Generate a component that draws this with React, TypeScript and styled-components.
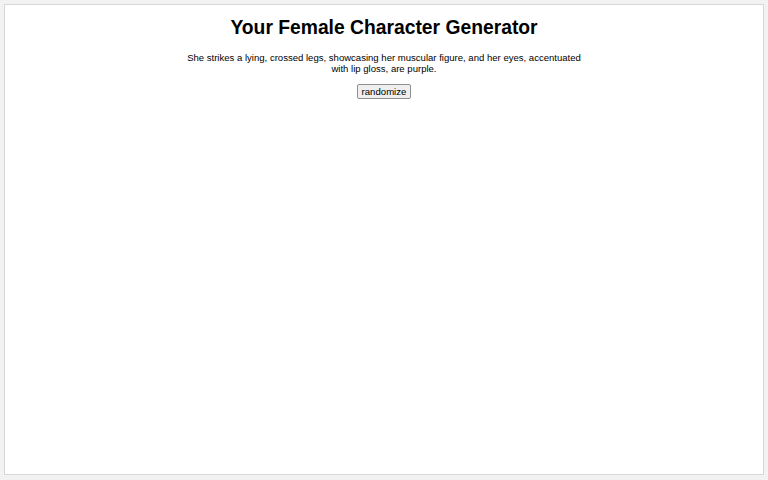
import React, { useState } from "react";
import styled, { createGlobalStyle } from "styled-components";

const Global = createGlobalStyle`
  html, body { margin: 0; padding: 0; background: #f2f2f2; }
  body { font-family: "Liberation Sans", Arial, sans-serif; }
`;

const Page = styled.div`
  box-sizing: border-box;
  height: 480px;
  padding: 4px 4px 5px 4px;
  display: flex;
`;

const Card = styled.main`
  flex: 1;
  background: #ffffff;
  border: 1px solid #d8d8d8;
  display: flex;
  flex-direction: column;
  align-items: center;
  padding-top: 12px;
`;

const Title = styled.h1`
  margin: 0;
  font-size: 19.3px;
  font-weight: bold;
  color: #000;
`;

const Description = styled.p`
  margin: 13px 0 0;
  max-width: 400px;
  font-size: 9.55px;
  line-height: 11px;
  text-align: center;
  color: #000;
`;

const Button = styled.button`
  margin-top: 10px;
  font-family: "Liberation Sans", Arial, sans-serif;
  font-size: 9.6px;
  padding: 1px 4px;
  background: #efefef;
  border: 1px solid #8f8f8f;
  border-radius: 2px;
  color: #000;
`;

const lines = [
  "She strikes a lying, crossed legs, showcasing her muscular figure, and her eyes, accentuated with lip gloss, are purple.",
];

export default function App() {
  const [text] = useState(lines[0]);
  return (
    <>
      <Global />
      <Page>
        <Card>
          <Title>Your Female Character Generator</Title>
          <Description>{text}</Description>
          <Button>randomize</Button>
        </Card>
      </Page>
    </>
  );
}
